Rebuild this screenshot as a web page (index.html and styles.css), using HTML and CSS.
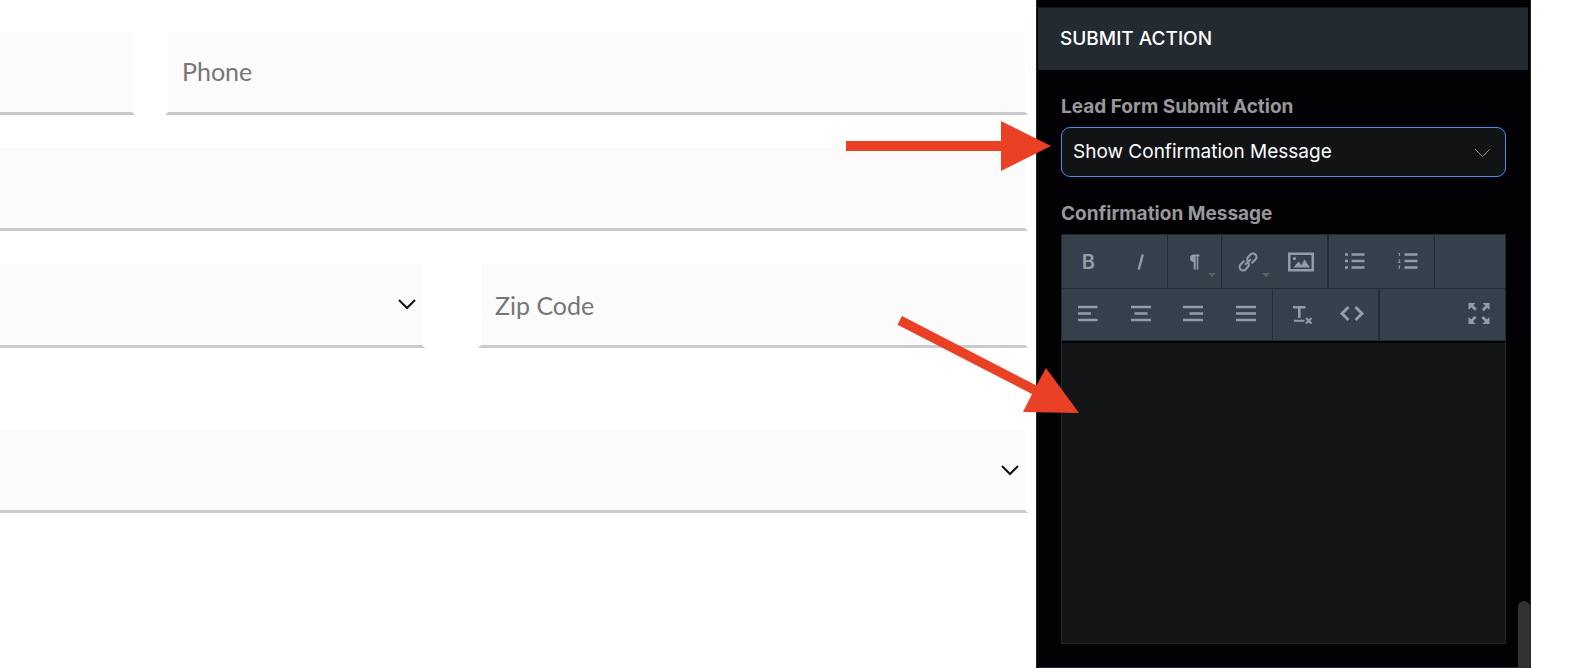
FILE: index.html
```html
<!DOCTYPE html>
<html lang="en">
<head>
<meta charset="utf-8">
<title>Lead form editor</title>
<link rel="stylesheet" href="styles.css">
</head>
<body>
<main class="form">
  <div class="row row-contact">
    <input class="field" type="email" aria-label="Email">
    <input class="field" type="tel" placeholder="Phone" aria-label="Phone">
  </div>
  <div class="row">
    <input class="field" type="text" aria-label="Address">
  </div>
  <div class="row row-region">
    <div class="picker">
      <select class="field tall" aria-label="State"><option></option></select>
      <svg class="picker-arrow" width="18" height="11" viewBox="0 0 18 11"><path d="M1 1l8 8 8-8"/></svg>
    </div>
    <input class="field tall" type="text" placeholder="Zip Code" aria-label="Zip Code">
  </div>
  <div class="row row-last">
    <div class="picker">
      <select class="field" aria-label="Reason"><option></option></select>
      <svg class="picker-arrow" width="18" height="11" viewBox="0 0 18 11"><path d="M1 1l8 8 8-8"/></svg>
    </div>
  </div>
</main>
<aside class="panel">
  <h2 class="panel-title">SUBMIT ACTION</h2>
  <div class="panel-body">
    <label class="label" for="action">Lead Form Submit Action</label>
    <div class="action">
      <select class="action-select" id="action"><option>Show Confirmation Message</option></select>
      <svg class="action-arrow" width="17" height="10" viewBox="0 0 17 10"><path d="M1 1l7.500 7.500L16 1"/></svg>
    </div>
    <label class="label" for="message">Confirmation Message</label>
    <div class="editor">
      <div class="tools">
        <div class="group pair">
          <button class="tool bold" aria-label="Bold">B</button>
          <button class="tool" aria-label="Italic"><svg width="26" height="26" viewBox="0 0 26 26"><path class="fill" d="M13.500 5.500H16l-4 15H9.500z"/></svg></button>
        </div>
        <div class="group single">
          <button class="tool" aria-label="Paragraph format"><svg width="26" height="26" viewBox="0 0 26 26"><path class="fill" d="M17.500 5.500v1.800h-1.200V20.500h-1.600V7.300h-1V20.500h-2V13C9.500 13 8 11.500 8 9.300 8 7 9.500 5.500 12 5.500z"/></svg><span class="caret"></span></button>
        </div>
        <div class="group pair double">
          <button class="tool" aria-label="Insert link"><svg width="26" height="26" viewBox="0 0 26 26"><g transform="rotate(-45 13 13)"><path class="line" d="M11.500 9.500H6a3.500 3.500 0 0 0 0 7H9a3.500 3.500 0 0 0 3.500-3M14.500 16.500H20a3.500 3.500 0 0 0 0-7H17a3.500 3.500 0 0 0-3.500 3"/><path class="line" d="M9 13h8"/></g></svg><span class="caret"></span></button>
          <button class="tool" aria-label="Insert image"><svg width="26" height="26" viewBox="0 0 26 26"><path class="fill" fill-rule="evenodd" d="M0 3.500h26v19H0zM2.500 6v14h21V6z"/><circle class="fill" cx="6.500" cy="9.500" r="1.600"/><path class="fill" d="M5.500 18.500l5-6 3 3.500 3-5.500 5.500 8z"/></svg></button>
        </div>
        <div class="group pair">
          <button class="tool" aria-label="Bulleted list"><svg width="26" height="26" viewBox="0 0 26 26"><path class="line medium" d="M9.500 5.500h13M9.500 12h13M9.500 18.500h13M3 5.500h3M3 12h3M3 18.500h3"/></svg></button>
          <button class="tool" aria-label="Numbered list"><svg width="26" height="26" viewBox="0 0 26 26"><path class="line medium" d="M9.500 5.500h13M9.500 12h13M9.500 18.500h13"/><path class="thin" d="M3.500 5l1-1v3M3.500 11h1.500l-1.500 2.500H5.500M3.500 17H5l-1 1 1 1-1.500.5"/></svg></button>
        </div>
      </div>
      <div class="tools lower">
        <div class="group quad">
          <button class="tool" aria-label="Align left"><svg width="26" height="26" viewBox="0 0 26 26"><path class="line medium" d="M3 7h19.500M3 13.500h13M3 20h19.500"/></svg></button>
          <button class="tool" aria-label="Align center"><svg width="26" height="26" viewBox="0 0 26 26"><path class="line medium" d="M3 7h20M6.500 13.500h13M3 20h20"/></svg></button>
          <button class="tool" aria-label="Align right"><svg width="26" height="26" viewBox="0 0 26 26"><path class="line medium" d="M3 7h20M9.500 13.500h13.500M3 20h20"/></svg></button>
          <button class="tool" aria-label="Justify"><svg width="26" height="26" viewBox="0 0 26 26"><path class="line medium" d="M3 7h20M3 13.500h20M3 20h20"/></svg></button>
        </div>
        <div class="group pair double">
          <button class="tool" aria-label="Clear formatting"><svg width="34" height="26" viewBox="0 0 34 26"><path class="line medium" d="M11 7.200h12.500M17.300 7v11"/><path class="line" d="M12 20.800h10.500M24 18l5.500 5.500M29.500 18L24 23.500"/></svg></button>
          <button class="tool" aria-label="Code view"><svg width="26" height="26" viewBox="0 0 26 26"><path class="line thick" d="M9.500 7L3 13.500 9.500 20M16.500 7l6.500 6.500-6.500 6.500"/></svg></button>
        </div>
        <div class="group end">
          <button class="tool" aria-label="Fullscreen"><svg width="26" height="26" viewBox="0 0 26 26"><path class="fill" d="M2.500 3h7L7.300 5.200l3.500 3.500-2 2-3.500-3.500L2.500 10zM23.500 3v7l-2.200-2.200-3.500 3.500-2-2 3.500-3.500L16.500 3zM2.500 24v-7l2.600 2.200 3.500-3.500 2 2-3.500 3.500L9.500 24zM23.500 24h-7l2.400-2.600-3.500-3.500 2-2 3.500 3.500 2.600-2.400z"/></svg></button>
        </div>
      </div>
      <textarea class="message" id="message"></textarea>
    </div>
  </div>
  <div class="next-section"></div>
  <div class="scrollbar"></div>
  <svg class="arrows" width="240" height="300" viewBox="0 0 240 300">
    <path d="M0 21h155V1l50 25-50 25V31H0z"/>
    <path d="M56 196l134.500 69.500L200 248l33 45-56-1 9-18L51.500 204.700z"/>
  </svg>
</aside>
</body>
</html>
```
FILE: styles.css
```css
* { box-sizing: border-box; }
body {
  margin: 0;
  display: flex;
  min-height: 100vh;
  background: #fff;
  font-family: "Lato", sans-serif;
}
.form {
  flex: 1;
  min-width: 0;
  padding: 32px 8px 0 0;
}
.row { display: grid; margin-bottom: 33px; }
.row-contact { grid-template-columns: 135fr 863fr; column-gap: 30px; }
.row-region { grid-template-columns: 425fr 550fr; column-gap: 53px; }
.row-last { margin-top: 82px; margin-bottom: 0; }
.field {
  width: 100%;
  min-width: 0;
  height: 83px;
  margin: 0;
  padding: 0 14px 2px;
  border: 3px solid transparent;
  border-top: 0;
  border-bottom-color: #cbcbcb;
  border-radius: 0;
  outline: 0;
  appearance: none;
  background: #fbfbfb;
  background-clip: padding-box;
  color: #333;
  font: 25px "Lato", sans-serif;
}
.row-contact .field:first-child,
.row:nth-child(2) .field,
.picker .field { border-left: 0; }
.tall { height: 84px; padding-bottom: 0; }
.field::placeholder { color: #767676; opacity: 1; }
.picker { display: grid; align-items: center; }
.picker > * { grid-area: 1 / 1; }
.picker-arrow {
  justify-self: end;
  margin-right: 9px;
  margin-bottom: 3px;
  fill: none;
  stroke: #111;
  stroke-width: 2;
  pointer-events: none;
}
.panel {
  position: relative;
  flex: none;
  width: 495px;
  margin-right: 55px;
  padding: 7px 1px 0;
  border: 1px solid #222426;
  border-width: 0 1px;
  background: #020204;
  font-family: "Inter", sans-serif;
}
.panel-title {
  margin: 0 1px 0 0;
  padding: 18px 22px 19px;
  border-top: 1px solid #15191c;
  background: #232a31;
  color: #fff;
  font-size: 19px;
  font-weight: 500;
  line-height: 25px;
}
.panel-body { padding: 23px 23px 23px; }
.label {
  display: block;
  margin-bottom: 6px;
  color: #98989b;
  font-size: 19px;
  font-weight: 700;
  line-height: 28px;
}
.action { display: grid; align-items: center; margin-bottom: 23px; }
.action > * { grid-area: 1 / 1; }
.action-select {
  height: 50px;
  padding: 0 11px 2px;
  border: 1px solid #428df0;
  border-radius: 9px;
  outline: 0;
  appearance: none;
  background: #121315;
  color: #fff;
  font: 19px "Inter", sans-serif;
}
.action-arrow {
  justify-self: end;
  margin-top: 2px;
  margin-right: 15px;
  fill: none;
  stroke: #8e8f91;
  pointer-events: none;
}
.editor { border: 1px solid #242628; }
.tools {
  display: flex;
  height: 54px;
  border-bottom: 1px solid #232d37;
  background: #35404b;
}
.lower { height: 52px; }
.group { display: flex; flex: none; border-right: 1px solid #232d37; }
.single { width: 54px; }
.pair { width: 106px; }
.quad { width: 211px; }
.double { width: 107px; border-right-width: 2px; }
.end { width: 53px; margin-left: auto; border: 0; }
.tool {
  position: relative;
  display: flex;
  flex: 1;
  align-items: center;
  justify-content: center;
  padding: 0;
  border: 0;
  background: none;
  color: #909eaa;
}
.lower .tool { padding-bottom: 3px; }
.bold { font: 600 20px "Inter", sans-serif; }
.caret {
  position: absolute;
  right: 5px;
  bottom: 11px;
  border: 4px solid transparent;
  border-top-color: #5f5f5d;
  border-bottom: 0;
}
.fill { fill: #909eaa; }
.line { fill: none; stroke: #909eaa; stroke-width: 2; }
.medium { stroke-width: 2.6; }
.thick { stroke-width: 3; }
.thin { fill: none; stroke: #909eaa; }
.message {
  display: block;
  width: 100%;
  height: 302px;
  padding: 16px;
  border: 0;
  border-top: 2px solid #020204;
  outline: 0;
  resize: none;
  background: #121415;
  color: #fff;
  font: 19px "Inter", sans-serif;
}
.next-section { height: 1px; margin-right: 1px; background: #232a31; }
.scrollbar {
  position: absolute;
  top: 601px;
  right: 0;
  bottom: 0;
  width: 12px;
  border-radius: 6px 6px 0 0;
  background: #323233;
}
.arrows {
  position: absolute;
  top: 120px;
  left: -191px;
  fill: #ea4026;
  pointer-events: none;
}
```
